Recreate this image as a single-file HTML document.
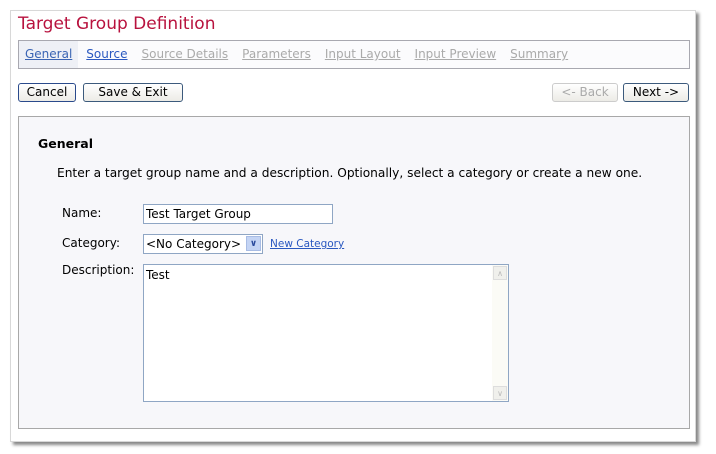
<!DOCTYPE html>
<html><head><style>
body{margin:0;width:716px;height:454px;background:#fff;font-family:Verdana,"DejaVu Sans",sans-serif;font-size:12px;position:relative;overflow:hidden;color:#000}
.a{position:absolute}
#outer{left:10px;top:10px;width:684px;height:430px;background:#fff;border:1px solid #d8d8d8;box-shadow:3px 3px 3px #888}
.btn{position:absolute;height:17px;border:1px solid #3c5a7c;border-radius:3px;background:linear-gradient(#fff,#ecebe6);font-size:12px;text-align:center;line-height:17px;box-sizing:content-box}
nav a{color:#aaa;text-decoration:underline;margin-right:14px}
</style></head><body>
<div id="outer" class="a"></div>
<div class="a" style="left:18px;top:14px;font-size:17px;color:#b8123e;font-family:'DejaVu Sans',sans-serif">Target Group Definition</div>
<div class="a" style="left:18px;top:40px;width:670px;height:27px;border:1px solid #a8a8b0;background:#fbfbfd"></div>
<div class="a" style="left:19px;top:41px;width:59px;height:27px;background:#eef0f6"></div>
<nav class="a" style="left:25px;top:47px;font-size:12px;white-space:nowrap;font-family:'DejaVu Sans',sans-serif"><a style="color:#3a64b4">General</a><a style="color:#2a58c0">Source</a><a>Source Details</a><a>Parameters</a><a>Input Layout</a><a>Input Preview</a><a>Summary</a></nav>
<div class="btn" style="left:18px;top:83px;width:56px;border-color:#2a4a8c">Cancel</div>
<div class="btn" style="left:83px;top:83px;width:98px">Save &amp; Exit</div>
<div class="btn" style="left:552px;top:83px;width:64px;border-color:#ccc;color:#aaa">&lt;- Back</div>
<div class="btn" style="left:623px;top:83px;width:64px">Next -&gt;</div>
<div class="a" style="left:18px;top:116px;width:670px;height:311px;border:1px solid #a8a8a8;background:#f7f7fa"></div>
<div class="a" style="left:38px;top:136px;font-weight:bold;font-size:12.5px">General</div>
<div class="a" style="left:57px;top:166px;font-size:12.2px;white-space:nowrap">Enter a target group name and a description. Optionally, select a category or create a new one.</div>
<div class="a" style="left:62px;top:206px">Name:</div>
<div class="a" style="left:62px;top:236px">Category:</div>
<div class="a" style="left:62px;top:263px">Description:</div>
<div class="a" style="left:143px;top:204px;border:1px solid #8fa6c4;background:#fff;line-height:18px;padding-left:2px;box-sizing:border-box;width:190px;height:20px">Test Target Group</div>
<div class="a" style="left:143px;top:234px;width:120px;height:20px;border:1px solid #8fa6c4;background:#fff;box-sizing:border-box;line-height:18px;padding-left:2px">&lt;No Category&gt;</div>
<div class="a" style="left:246px;top:236px;width:15px;height:15px;background:#c4d4f4;border:1px solid #a8bce4;box-sizing:border-box;color:#2a4a9c;font-size:9px;text-align:center;line-height:14px;font-weight:bold">&#8744;</div>
<div class="a" style="left:270px;top:238px;font-size:10.5px;color:#2a58c0;text-decoration:underline">New Category</div>
<div class="a" style="left:143px;top:264px;width:366px;height:138px;border:1px solid #8fa6c4;background:#fff;box-sizing:border-box;padding:3px 2px">Test</div>
<div class="a" style="left:492px;top:265px;width:16px;height:136px;background:#fbfbf6"></div>
<div class="a" style="left:493px;top:266px;width:14px;height:14px;border:1px solid #ddd;background:#f0f0ec;color:#bbb;font-size:8px;text-align:center;line-height:14px;box-sizing:border-box">&#8743;</div>
<div class="a" style="left:493px;top:386px;width:14px;height:14px;border:1px solid #ddd;background:#f0f0ec;color:#bbb;font-size:8px;text-align:center;line-height:14px;box-sizing:border-box">&#8744;</div>
</body></html>
